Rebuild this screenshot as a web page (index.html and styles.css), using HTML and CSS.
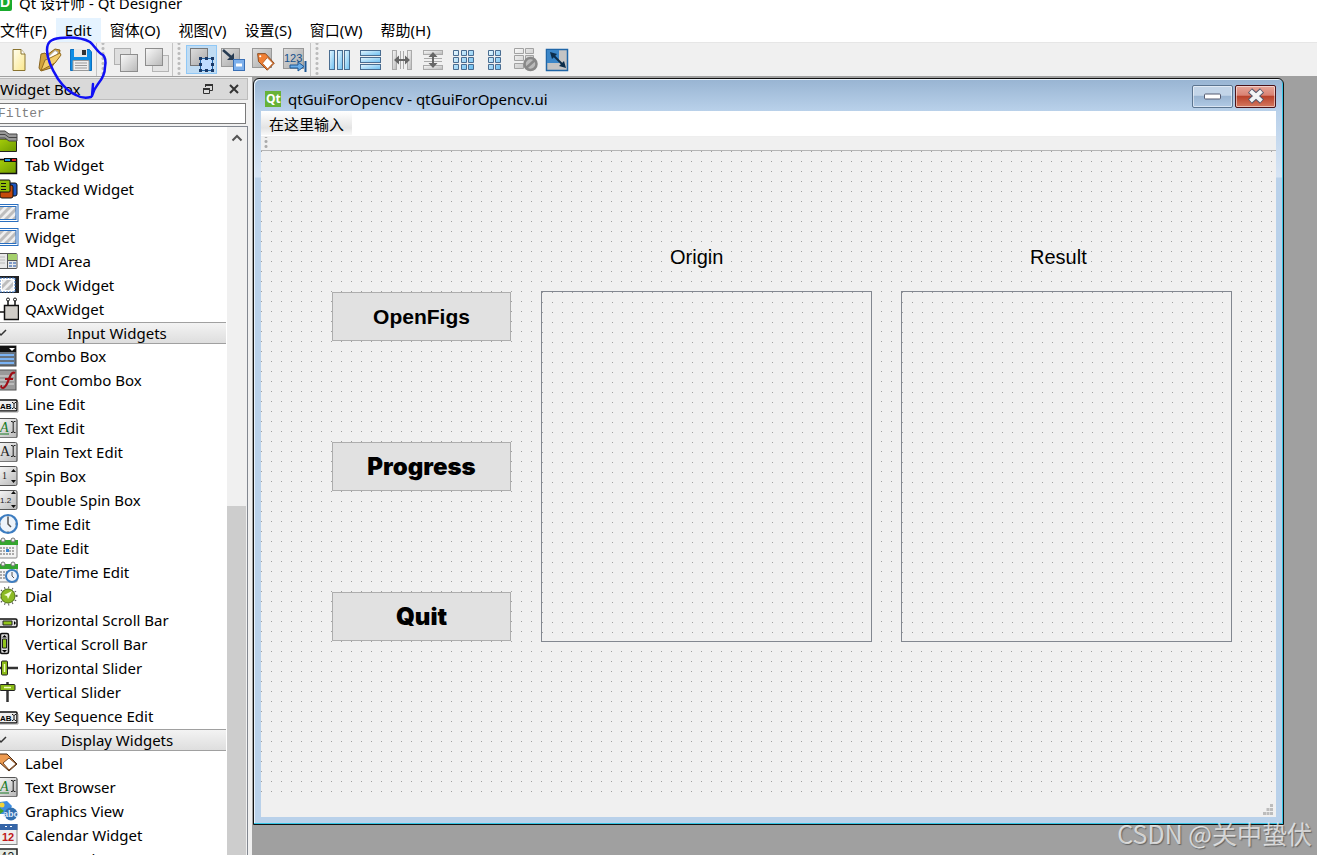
FILE: index.html
```
<!DOCTYPE html>
<html lang="zh-CN">
<head>
<meta charset="UTF-8">
<meta name="viewport" content="width=device-width, initial-scale=1.0">
<title>Qt 设计师 - Qt Designer</title>
<link rel="stylesheet" href="styles.css">
</head>
<body>
<!-- shared gradients and repeated icons -->
<svg class="defs" width="0" height="0">
    <defs>
        <linearGradient id="gray" x2="1" y2="1"><stop offset="0" stop-color="#fafafa"/><stop offset="1" stop-color="#b8b8b8"/></linearGradient>
        <linearGradient id="steel" x2="1" y2="1"><stop offset="0" stop-color="#dedede"/><stop offset="1" stop-color="#a8a8a8"/></linearGradient>
        <linearGradient id="blue" x2="1" y2="1"><stop offset="0" stop-color="#e8f8ff"/><stop offset="1" stop-color="#69bdf0"/></linearGradient>
        <linearGradient id="green" x2="1" y2="1"><stop offset="0" stop-color="#a8cf0a"/><stop offset="1" stop-color="#6d9a00"/></linearGradient>
        <linearGradient id="paper" x2="1" y2="1"><stop offset="0" stop-color="#fffef0"/><stop offset="1" stop-color="#fbe78c"/></linearGradient>
        <pattern id="hatch" width="8" height="8" patternUnits="userSpaceOnUse"><rect width="8" height="8" fill="#efefef"/><path d="M-2 10L10-2M-6 6L6-6M2 14L14 2" stroke="#bdbdbd" stroke-width="3"/></pattern>
        <symbol id="abi" viewBox="0 0 19 24"><rect x="-4" y="8" width="21" height="11" rx="1" fill="#eee" stroke="#111" stroke-width="1.5"/><path d="M-2 20H18V10" stroke="#999" fill="none"/><text x="0" y="17" font-size="8" font-weight="bold" font-family="Liberation Sans">AB</text><path d="M12 10.500h1l1 1 1-1h1M14 11v5M12 16.500h1l1-1 1 1h1" stroke="#111" fill="none"/></symbol>
        <symbol id="frame" viewBox="0 0 19 24"><rect x="-3" y="3.500" width="21" height="17" fill="#fff" stroke="#2a6fc0"/><rect x="-1" y="5.500" width="17" height="13" fill="url(#hatch)" stroke="#2a6fc0"/></symbol>
        <symbol id="ai" viewBox="0 0 19 24"><rect x="-4" y="2.500" width="21" height="19" rx="1.500" fill="url(#gray)" stroke="#555"/><path d="M-1 21.500H17V4" stroke="#777" fill="none"/><path d="M11 5.500h1.500l.7 1 .7-1H15.500M13.200 6v10M11 16.500h1.500l.7-1 .7 1H15.500" stroke="#222" fill="none"/></symbol>
        <symbol id="cal" viewBox="0 0 19 24"><rect x="-4" y="5" width="21" height="17" rx="1" fill="#f4f4f4" stroke="#888"/><path d="M-4 4H18V9H-4z" fill="#35a52f"/><path d="M0 12H15M0 15H15M0 18H15" stroke="#aaa" stroke-width="2" stroke-dasharray="2 1"/><circle cx="3" cy="4" r="2" fill="#eee" stroke="#777"/><circle cx="13" cy="4" r="2" fill="#eee" stroke="#777"/></symbol>
        <symbol id="tag" viewBox="0 0 24 24"><path d="M3 3L12 3 22 14 14 22 4 12z" fill="#f18035" stroke="#823f12"/><path d="M14 7.500L20.500 14 14.500 20.500 8.500 14z" fill="#fff" stroke="#b55a20"/><circle cx="6" cy="6" r="1.200" fill="#fff"/></symbol>
    </defs>
</svg>

<header class="titlebar">
    <svg width="14" height="18" viewBox="0 0 14 18"><rect x="-8" y="-2" width="20" height="19" rx="2" fill="#19ab2d"/><text x="0" y="13" font-size="14" font-weight="bold" fill="#fff" font-family="Liberation Sans">D</text></svg>
    <span>Qt 设计师 - Qt Designer</span>
</header>

<nav class="menubar">
    <button>文件(F)</button>
    <button class="active">Edit</button>
    <button>窗体(O)</button>
    <button>视图(V)</button>
    <button>设置(S)</button>
    <button>窗口(W)</button>
    <button>帮助(H)</button>
</nav>

<div class="toolbar">
    <button aria-label="New"><svg viewBox="0 0 24 24"><path d="M6 1.500H14L18 6V22.500H6z" fill="url(#paper)" stroke="#8a7430"/><path d="M14 1.500V6H18" fill="#fff" stroke="#8a7430"/></svg></button>
    <button aria-label="Open"><svg viewBox="0 0 24 24"><path d="M1 20L3 6 7 5 9 7 17 1 22 2 21 9 13 20 3 23z" fill="#d2a33b" stroke="#886420"/><path d="M6 13L17 2.500 20 4 19 9 8 15z" fill="#fff" stroke="#aaa"/><path d="M3 22.500L7 12 12 10 22 5 23 7 17 15z" fill="#f2cd6c" stroke="#946c20"/></svg></button>
    <button aria-label="Save"><svg viewBox="0 0 24 24"><path d="M1.500 1.500H20.500L22.500 4V22.500H1.500z" fill="#0f8de4" stroke="#0b70c0"/><path d="M5 1H18V9H5z" fill="#e8e8e8"/><path d="M13 2H17V7H13z" fill="#333"/><path d="M4 12.500H20V22.500H4z" fill="#eee" stroke="#999"/><path d="M6 15H18M6 17.500H18M6 20H18" stroke="#999"/></svg></button>
    <span class="handle"></span>
    <button aria-label="Send to back"><svg viewBox="0 0 24 24"><rect x=".5" y=".5" width="16" height="16" fill="#dedede" stroke="#b0b0b0"/><rect x="6.500" y="6.500" width="17" height="17" fill="url(#gray)" stroke="#8d8d8d"/></svg></button>
    <button aria-label="Bring to front"><svg viewBox="0 0 24 24"><rect x="7.500" y="7.500" width="16" height="16" fill="#e4e4e4" stroke="#b5b5b5"/><rect x=".5" y=".5" width="17" height="17" fill="url(#gray)" stroke="#8d8d8d"/></svg></button>
    <span class="handle"></span>
    <button class="active" aria-label="Edit widgets"><svg viewBox="0 0 24 24"><rect x=".5" y=".5" width="17" height="17" fill="url(#steel)" stroke="#777"/><rect x="10.500" y="10.500" width="12" height="12" fill="#bfdcff" stroke="#2266a8"/><path d="M9 9h3v3H9zM15 9h3v3h-3zM21 9h3v3h-3zM9 15h3v3H9zM21 15h3v3h-3zM9 21h3v3H9zM15 21h3v3h-3zM21 21h3v3h-3z" fill="#193866"/></svg></button>
    <button aria-label="Edit signals"><svg viewBox="0 0 24 24"><rect x=".5" y=".5" width="18" height="18" fill="url(#steel)" stroke="#999"/><path d="M2 2L10 9" stroke="#263b52" stroke-width="2.500"/><path d="M13 5V12H6z" fill="#263b52"/><rect x="12.500" y="11.500" width="11" height="11" fill="#7db0ec" stroke="#386eb4"/><path d="M15 15.500H21V18.500H15z" fill="#fff"/></svg></button>
    <button aria-label="Edit buddies"><svg viewBox="0 0 24 24"><rect x=".5" y=".5" width="19" height="19" fill="url(#steel)" stroke="#999"/><use href="#tag" x="3" y="3" width="21" height="21"/></svg></button>
    <button aria-label="Edit tab order"><svg viewBox="0 0 24 24"><rect x=".5" y=".5" width="20" height="20" fill="url(#steel)" stroke="#999"/><text x="1" y="14" font-size="11" fill="#15518c" font-family="Liberation Sans">123</text><path d="M7 17H15V14L21 18.500 15 23V20H7z" fill="#6caee8" stroke="#1d5795"/><path d="M22.500 13V24" stroke="#1d5795" stroke-width="2"/></svg></button>
    <span class="handle"></span>
    <button aria-label="Lay out horizontally"><svg viewBox="0 0 24 24"><g fill="url(#blue)" stroke="#4a6d91"><rect x="1.500" y="2.500" width="5" height="19"/><rect x="9.500" y="2.500" width="5" height="19"/><rect x="16.500" y="2.500" width="5" height="19"/></g></svg></button>
    <button aria-label="Lay out vertically"><svg viewBox="0 0 24 24"><g fill="url(#blue)" stroke="#4a6d91"><rect x="1.500" y="2.500" width="20" height="5"/><rect x="1.500" y="9.500" width="20" height="5"/><rect x="1.500" y="16.500" width="20" height="5"/></g></svg></button>
    <button aria-label="Horizontal splitter"><svg viewBox="0 0 24 24"><g fill="url(#gray)" stroke="#aaa"><rect x="2.500" y="2.500" width="4" height="19"/><rect x="17.500" y="2.500" width="4" height="19"/></g><path d="M10.500 3V21M13.500 3V21" stroke="#aaa"/><path d="M4 12L9 7.500V11H15V7.500L20 12 15 16.500V13H9V16.500z" fill="#666"/></svg></button>
    <button aria-label="Vertical splitter"><svg viewBox="0 0 24 24"><g fill="url(#gray)" stroke="#aaa"><rect x="2.500" y="2.500" width="19" height="4"/><rect x="2.500" y="17.500" width="19" height="4"/></g><path d="M3 10.500H21M3 13.500H21" stroke="#aaa"/><path d="M12 4L16.500 9H13V15H16.500L12 20 7.500 15H11V9H7.500z" fill="#666"/></svg></button>
    <button aria-label="Grid layout"><svg viewBox="0 0 24 24"><g fill="url(#blue)" stroke="#4a6d91"><path d="M1.500 2.500h5v5h-5zM9.500 2.500h5v5h-5zM16.500 2.500h5v5h-5zM1.500 9.500h5v5h-5zM9.500 9.500h5v5h-5zM16.500 9.500h5v5h-5zM1.500 16.500h5v5h-5zM9.500 16.500h5v5h-5zM16.500 16.500h5v5h-5z"/></g></svg></button>
    <button aria-label="Form layout"><svg viewBox="0 0 24 24"><g fill="url(#blue)" stroke="#4a6d91"><path d="M5.500 2.500h5v5h-5zM12.500 2.500h5v5h-5zM5.500 9.500h5v5h-5zM12.500 9.500h5v5h-5zM5.500 16.500h5v5h-5zM12.500 16.500h5v5h-5z"/></g></svg></button>
    <button aria-label="Break layout"><svg viewBox="0 0 24 24"><g fill="url(#gray)" stroke="#a2a2a2"><path d="M.5.500h9v5h-9zM11.500.5h8v5h-8zM.5 7.500h9v5h-9zM11.500 7.500h8v5h-8zM.5 15.500h9v5h-9z"/></g><circle cx="16.500" cy="16" r="6" fill="#bbb" stroke="#888" stroke-width="2.500"/><path d="M12 20L21 12" stroke="#888" stroke-width="2.500"/></svg></button>
    <button aria-label="Adjust size"><svg viewBox="0 0 24 24"><rect x="1.500" y="1.500" width="21" height="21" fill="#c4c4c4" stroke="#1f66a8" stroke-width="1.500"/><path d="M2 2H14V15H2z" fill="#3b86c8"/><path d="M7 6L19 18" stroke="#0c2d4a" stroke-width="2"/><path d="M5 4L12 6 7 11zM21 20L14 18 19 13z" fill="#0c2d4a"/></svg></button>
</div>

<main class="workspace">
    <aside class="dock">
        <div class="dock-title">
            <h2>Widget Box</h2>
            <button aria-label="Float"><svg width="12" height="12" viewBox="0 0 12 12"><path d="M3.500 4V1.500H10.500V7.500H8" fill="none" stroke="#333"/><path d="M3 2H11" stroke="#333" stroke-width="2"/><path d="M1.500 5.500H7.500V10.500H1.500z" fill="#ddd" stroke="#333"/><path d="M1 6H8" stroke="#333" stroke-width="2"/></svg></button>
            <button aria-label="Close"><svg width="12" height="12" viewBox="0 0 12 12"><path d="M2 2L10 10M10 2L2 10" stroke="#333" stroke-width="2"/></svg></button>
        </div>
        <input class="filter" type="text" placeholder="Filter" aria-label="Filter">
        <div class="box">
            <div class="list">
                <ul>
                    <li><svg viewBox="0 0 19 24"><path d="M-2 10H16.500V22.500H-2z" fill="url(#green)" stroke="#222"/><path d="M-2 2H5L9 5H17V12H9L5 9H-2z" fill="#999" stroke="#444"/><path d="M-2 5.500H5L9 8.500H17" stroke="#444" fill="none"/></svg>Tool Box</li>
                    <li><svg viewBox="0 0 19 24"><path d="M-2 6.500H16.500V20.500H-2z" fill="url(#green)" stroke="#111" stroke-width="1.500"/><path d="M4 5H17V9H4z" fill="#111"/><path d="M5 6H10V8H5z" fill="#299be3"/><path d="M12 6H16V8H12z" fill="#e02020"/></svg>Tab Widget</li>
                    <li><svg viewBox="0 0 19 24"><rect x="4" y="6" width="13" height="13" rx="2" fill="#1c55c0" stroke="#111"/><rect x="0" y="8" width="13" height="13" rx="2" fill="#c44a0c" stroke="#111"/><rect x="-4" y="3" width="14" height="12" rx="1" fill="#92be08" stroke="#111"/><path d="M1 6.500H6M1 9.500H6M1 12.500H6" stroke="#111"/></svg>Stacked Widget</li>
                    <li><svg><use href="#frame"/></svg>Frame</li>
                    <li><svg><use href="#frame"/></svg>Widget</li>
                    <li><svg viewBox="0 0 19 24"><rect x="-4" y="4.500" width="21" height="15" rx="1" fill="#e9e9e9" stroke="#555"/><path d="M8 5H17V11H8z" fill="#a5d06c"/><path d="M7.500 5V19M8 11.500H17" stroke="#555"/><path d="M0 8H5M0 11H5M0 14H5" stroke="#bbb"/><path d="M9 14H16M9 17H16" stroke="#7f9bc8" stroke-width="2" stroke-dasharray="3 1"/></svg>MDI Area</li>
                    <li><svg viewBox="0 0 19 24"><rect x="-4" y="3" width="23" height="17" fill="#222"/><rect x="0" y="5" width="15" height="14" fill="#fff" stroke="#326ebe" stroke-dasharray="2 1"/><rect x="2" y="7" width="11" height="10" fill="url(#hatch)"/></svg>Dock Widget</li>
                    <li><svg viewBox="0 0 19 24"><rect x="4.500" y="8.500" width="14" height="14" fill="#d0cdc8" stroke="#111" stroke-width="1.500"/><path d="M8 8V3M15 8V3M0 15H4" stroke="#111" stroke-width="1.500"/><circle cx="8" cy="2.500" r="1.500" fill="#fff" stroke="#111"/><circle cx="15" cy="2.500" r="1.500" fill="#fff" stroke="#111"/></svg>QAxWidget</li>
                </ul>
                <h3><svg width="8" height="8" viewBox="0 0 8 8"><path d="M-2 3L1 6 6 1" fill="none" stroke="#333" stroke-width="1.500"/></svg>Input Widgets</h3>
                <ul>
                    <li><svg viewBox="0 0 19 24"><rect x="-4" y="2" width="20" height="20" fill="#67727e" stroke="#444"/><path d="M-1 2H16V8H-1z" fill="#111"/><path d="M9 4H15L12 7z" fill="#fff"/><path d="M0 11H14M0 15H14M0 19H14" stroke="#7ab2f3" stroke-width="2"/></svg>Combo Box</li>
                    <li><svg viewBox="0 0 19 24"><rect x="-4" y="2" width="20" height="20" fill="#9a9a9a" stroke="#555"/><path d="M0 8H14M0 12H14M0 16H14" stroke="#bbb" stroke-width="2"/><path d="M15 5C9 2 9 19 3 20 1 20 1 18 2 18M5 11H13" fill="none" stroke="#a00d15" stroke-width="2.200"/></svg>Font Combo Box</li>
                    <li><svg><use href="#abi"/></svg>Line Edit</li>
                    <li><svg><use href="#ai"/><text x="0" y="16" font-size="14" font-style="italic" fill="#1a7a26" font-family="Liberation Serif">A</text><path d="M0 18H9" stroke="#1a7a26"/></svg>Text Edit</li>
                    <li><svg><use href="#ai"/><text x="0" y="16" font-size="14" fill="#222" font-family="Liberation Serif">A</text></svg>Plain Text Edit</li>
                    <li><svg viewBox="0 0 19 24"><rect x="-4" y="2.500" width="21" height="19" rx="1.500" fill="url(#gray)" stroke="#555"/><text x="2" y="15" font-size="10" fill="#222" font-family="Liberation Serif">1</text><path d="M11 8L13.500 5 16 8zM11 16L13.500 19 16 16z" fill="#111"/></svg>Spin Box</li>
                    <li><svg viewBox="0 0 19 24"><rect x="-4" y="2.500" width="21" height="19" rx="1.500" fill="url(#gray)" stroke="#555"/><text x="0" y="15" font-size="8" fill="#222" font-family="Liberation Sans">1.2</text><path d="M11 6L13.500 3 16 6zM11 17L13.500 20 16 17z" fill="#111"/></svg>Double Spin Box</li>
                    <li><svg viewBox="0 0 19 24"><circle cx="8" cy="12" r="9" fill="#edf3fa" stroke="#3c7cc0" stroke-width="2.200"/><path d="M8 5V12L11 15" fill="none" stroke="#555" stroke-width="1.500"/><path d="M8 4v1M8 19v1M15 12h1M0 12h1" stroke="#777"/></svg>Time Edit</li>
                    <li><svg viewBox="0 0 19 24"><use href="#cal"/><path d="M6 13H9V16H6z" fill="#3584d5"/></svg>Date Edit</li>
                    <li><svg viewBox="0 0 19 24"><use href="#cal"/><circle cx="12" cy="16" r="6" fill="#edf3fa" stroke="#3c7cc0" stroke-width="2"/><path d="M12 12V16L14 18" fill="none" stroke="#555"/></svg>Date/Time Edit</li>
                    <li><svg viewBox="0 0 19 24"><circle cx="8" cy="12" r="8.500" fill="none" stroke="#555" stroke-width="2" stroke-dasharray="1 3"/><circle cx="8" cy="12" r="7" fill="#8cba24" stroke="#4d7010"/><path d="M12 7L8 15 7 12 4 11z" fill="#f5ffd8"/></svg>Dial</li>
                    <li><svg viewBox="0 0 19 24"><rect x="-4" y="11" width="21" height="8" rx="1.500" fill="#ddd" stroke="#111" stroke-width="1.500"/><path d="M3 13H12V17H3z" fill="#91c51b" stroke="#222"/><path d="M14 13L16 15 14 17z"/></svg>Horizontal Scroll Bar</li>
                    <li><svg viewBox="0 0 19 24"><rect x=".5" y="1.500" width="8" height="20" rx="1.500" fill="#ddd" stroke="#111" stroke-width="1.500"/><path d="M2.500 7H6.500V16H2.500z" fill="#91c51b" stroke="#222"/><path d="M2 5.500L4.500 3 7 5.500zM2 18L4.500 20.500 7 18z"/></svg>Vertical Scroll Bar</li>
                    <li><svg viewBox="0 0 19 24"><path d="M0 12H18" stroke="#333" stroke-width="2.500"/><rect x="1.500" y="5" width="6" height="14" rx="1" fill="#8aba16" stroke="#222"/><path d="M4.500 8V16" stroke="#f2ffc0" stroke-width="1.500"/></svg>Horizontal Slider</li>
                    <li><svg viewBox="0 0 19 24"><path d="M7.500 2V22" stroke="#333" stroke-width="2.500"/><rect x="0" y="4.500" width="15" height="6" rx="1" fill="#8aba16" stroke="#222"/><path d="M4 7.500H11" stroke="#f2ffc0" stroke-width="1.500"/></svg>Vertical Slider</li>
                    <li><svg><use href="#abi"/></svg>Key Sequence Edit</li>
                </ul>
                <h3><svg width="8" height="8" viewBox="0 0 8 8"><path d="M-2 3L1 6 6 1" fill="none" stroke="#333" stroke-width="1.500"/></svg>Display Widgets</h3>
                <ul>
                    <li><svg viewBox="0 0 19 24"><path d="M-1 3L7 3 17 13 9 20 -1 11z" fill="#ed9a50" stroke="#4c2d16"/><path d="M9 7L16 13 9 19 3 12z" fill="#fff" stroke="#75431e"/></svg>Label</li>
                    <li><svg><use href="#ai"/><text x="0" y="16" font-size="14" font-style="italic" fill="#1a7a26" font-family="Liberation Serif">A</text><path d="M0 18H9" stroke="#1a7a26"/></svg>Text Browser</li>
                    <li><svg viewBox="0 0 19 24"><path d="M-1 3L7 2 12 7 8 15H-1z" fill="#3e8de0"/><circle cx="2" cy="6" r="2.500" fill="#f2d338"/><path d="M0 9L4 12 0 15z" fill="#43a32a"/><circle cx="11" cy="15" r="6.500" fill="#326fae"/><text x="3" y="18" font-size="9" font-weight="bold" fill="#dce9f8" font-family="Liberation Sans">abc</text></svg>Graphics View</li>
                    <li><svg viewBox="0 0 19 24"><rect x="-4" y="1.500" width="21" height="20" fill="#eee" stroke="#888"/><path d="M-4 1H17.500V7H-4z" fill="#3666a8"/><path d="M5 3.500H7M10 3.500H12" stroke="#fff"/><text x="2" y="18" font-size="11" font-weight="bold" fill="#c01818" font-family="Liberation Sans">12</text></svg>Calendar Widget</li>
                    <li><svg viewBox="0 0 19 24"><rect x="-4" y="2" width="21" height="19" fill="#e5eae2" stroke="#222" stroke-width="1.500"/><text x="0" y="14" font-size="12" fill="#111" font-family="Liberation Mono">42</text></svg>LCD Number</li>
                </ul>
            </div>
            <div class="scrollbar">
                <button aria-label="Scroll up"><svg width="12" height="8" viewBox="0 0 12 8"><path d="M1.500 6.500L6 2 10.500 6.500" fill="none" stroke="#555" stroke-width="2"/></svg></button>
                <div class="thumb"></div>
            </div>
        </div>
    </aside>

    <section class="mdi">
        <div class="window">
            <div class="window-title">
                <svg width="16" height="16" viewBox="0 0 16 16"><rect width="16" height="16" fill="#67b237"/><text x="1" y="12" font-size="12" font-weight="bold" fill="#fff" font-family="Open Sans">Qt</text></svg>
                <h1>qtGuiForOpencv - qtGuiForOpencv.ui</h1>
                <button class="minimize" aria-label="Minimize"><svg width="18" height="16" viewBox="0 0 18 16"><rect x=".5" y="6" width="16" height="5" rx="1" fill="#fff" stroke="#555b70"/></svg></button>
                <button class="close" aria-label="Close window"><svg width="18" height="16" viewBox="0 0 18 16"><path d="M3 2.500L15 13.500M15 2.500L3 13.500" stroke="#54566a" stroke-width="6"/><path d="M3.500 3L14.500 13M14.500 3L3.500 13" stroke="#f4f4f4" stroke-width="4"/></svg></button>
            </div>
            <div class="form">
                <div class="form-menu"><button>在这里输入</button></div>
                <div class="form-toolbar"></div>
                <div class="canvas">
                    <span class="label origin">Origin</span>
                    <span class="label result">Result</span>
                    <button class="push open">OpenFigs</button>
                    <button class="push progress">Progress</button>
                    <button class="push quit">Quit</button>
                    <div class="view view-origin"></div>
                    <div class="view view-result"></div>
                </div>
                <div class="statusbar"><svg width="10" height="11" viewBox="0 0 10 11"><path d="M7 0h3v3H7zM3.500 4h3v3h-3zM7 4h3v3H7zM0 8h3v3H0zM3.500 8h3v3h-3zM7 8h3v3H7z" fill="#bcbcbc"/></svg></div>
            </div>
        </div>
    </section>
</main>

<svg class="pen" width="120" height="110" viewBox="0 0 120 110"><path d="M93 84L92 96C93 92 94 89 98 84C103 78 105 73 105 67C106 62 106 58 103 55C97 52 95 46 90 42C83 38 71 37 60 38C51 39 47 42 47 50C47 60 53 71 58 79C63 86 69 92 76 95C81 98 87 98 91 97" fill="none" stroke="#1010f5" stroke-width="2.500" stroke-linecap="round" stroke-linejoin="round"/></svg>
<div class="watermark">CSDN @关中蛰伏</div>
</body>
</html>
```
FILE: styles.css
```
* {
    box-sizing: border-box;
}

body {
    margin: 0;
    height: 100vh;
    display: flex;
    flex-direction: column;
    overflow: hidden;
    position: relative;
    background-color: #fff;
    color: #000;
    font-family: "Noto Sans", "Noto Sans CJK SC", sans-serif;
    font-size: 15px;
}

button {
    margin: 0;
    padding: 0;
    border: none;
    background: none;
    color: inherit;
    font: inherit;
}

h1, h2, h3, ul {
    margin: 0;
    padding: 0;
    font-size: inherit;
    font-weight: normal;
    list-style: none;
}

svg {
    display: block;
    flex: none;
}

.defs {
    position: absolute;
}

.titlebar {
    display: flex;
    align-items: center;
    gap: 5px;
    height: 26px;
    margin-top: -8px;
    padding-bottom: 4px;
    flex: none;
    line-height: 20px;
}

/* menu */
.menubar {
    display: flex;
    flex: none;
    height: 24px;
    margin-left: -9px;
}

.menubar button {
    padding: 0 9px;
    line-height: 24px;
    white-space: nowrap;
}

.menubar .active {
    background-color: #e5f3ff;
}

/* toolbar */
.toolbar {
    display: flex;
    align-items: center;
    flex: none;
    height: 35px;
    padding: 0 3px;
    background-color: #f0f0f0;
    border-top: 1px solid #e6e6e6;
    border-bottom: 1px solid #a0a0a0;
}

.toolbar button {
    width: 31px;
    height: 29px;
    display: flex;
    align-items: center;
    justify-content: center;
}

.toolbar svg {
    width: 24px;
    height: 24px;
}

.toolbar .active {
    background-color: #c0dcf3;
    border: 1px solid #90c8f6;
}

.handle {
    width: 14px;
    height: 100%;
    background: radial-gradient(circle, #bbb 1px, transparent 2px) 4px 3px / 4px 5px repeat-y;
    border-left: 1px solid #c4c4c4;
}

.workspace {
    display: flex;
    flex: 1;
    min-height: 0;
    background-color: #f0f0f0;
}

/* widget box */
.dock {
    width: 248px;
    margin-right: 4px;
    flex: none;
    display: flex;
    flex-direction: column;
}

.dock-title {
    display: flex;
    align-items: center;
    gap: 14px;
    height: 22px;
    margin-top: 1px;
    padding-right: 7px;
    flex: none;
    background-color: #d9d9d9;
    border: 1px solid #bcbcbc;
    border-left: none;
}

.dock-title h2 {
    flex: 1;
}

.filter {
    height: 21px;
    margin: 3px 2px 2px -4px;
    padding: 0 1px;
    flex: none;
    background-color: #fff;
    border: 1px solid #7a7a7a;
    font-family: "Liberation Mono", monospace;
    font-size: 13px;
}

.filter::placeholder {
    color: #808080;
}

.box {
    display: flex;
    flex: 1;
    min-height: 0;
    background-color: #fff;
    border-top: 1px solid #828790;
    border-right: 1px solid #828790;
}

.list {
    flex: 1;
    overflow: hidden;
    padding-top: 2px;
}

.list li {
    display: flex;
    align-items: center;
    gap: 6px;
    height: 24px;
    white-space: nowrap;
}

.list li svg {
    width: 19px;
    height: 24px;
}

.list h3 {
    display: flex;
    align-items: center;
    height: 22px;
    margin: 1px 1px 0 0;
    background: linear-gradient(#f3f3f3, #dedede);
    border-top: 1px solid #a0a0a0;
    border-bottom: 1px solid #a0a0a0;
}

.list h3 svg {
    margin-right: auto;
}

.list h3::after {
    content: "";
    margin-right: auto;
}

.scrollbar {
    width: 20px;
    display: flex;
    flex-direction: column;
    background-color: #f0f0f0;
    padding-right: 1px;
}

.scrollbar button {
    height: 22px;
    margin-bottom: 357px;
    flex: none;
    display: flex;
    align-items: center;
    justify-content: center;
}

.thumb {
    flex: 1;
    background-color: #cdcdcd;
}

/* form window */
.mdi {
    flex: 1;
    min-width: 0;
    display: flex;
    padding: 1px 33px 30px 1px;
    background-color: #a0a0a0;
}

.window {
    flex: 1;
    min-width: 0;
    display: flex;
    flex-direction: column;
    padding: 0 7px 7px;
    background: linear-gradient(#98b4d2, #b9d1ea 32px, #d6e4f4 98px, #b9d1ea 99px);
    border: 1px solid #111;
    border-radius: 6px 6px 0 0;
    box-shadow: inset -1px -1px #35c5e5, inset 1px 1px #eaf3fc;
}

.window-title {
    display: flex;
    align-items: center;
    height: 32px;
    padding: 8px 0 0 4px;
    gap: 7px;
    flex: none;
}

.window-title h1 {
    flex: 1;
    white-space: nowrap;
}

.window-title button {
    width: 41px;
    height: 23px;
    margin-bottom: 6px;
    display: flex;
    align-items: center;
    justify-content: center;
    border: 1px solid #5c7590;
    border-radius: 2px;
    box-shadow: inset 0 0 0 1px rgba(255, 255, 255, 0.5);
}

.window-title .minimize {
    margin-right: -5px;
    background: linear-gradient(#c3d5e8 45%, #99b4d1 46%, #b1cae5);
}

.window-title .close {
    background: linear-gradient(#e6a598, #d98172 45%, #b83e27 46%, #d4785f);
    border-color: #4b1218;
}

.form {
    flex: 1;
    min-height: 0;
    display: flex;
    flex-direction: column;
    background-color: #f0f0f0;
}

.form-menu {
    height: 26px;
    flex: none;
    background-color: #fff;
    border-bottom: 1px solid #eee;
}

.form-menu button {
    height: 24px;
    padding: 0 8px;
    background: linear-gradient(#fff, #e4e4e4 70%, #f8f8f8);
}

.form-toolbar {
    height: 14px;
    flex: none;
    background: radial-gradient(circle, #aaa 1px, transparent 2px) 3px 2px / 4px 5px repeat-y;
    background-clip: content-box;
    padding-right: calc(100% - 8px);
    border-bottom: 1px solid #b4b4b4;
}

.canvas {
    position: relative;
    flex: 1;
    background: conic-gradient(from 270deg at 1px 1px, #a0a0a0 90deg, #f0f0f0 0) 0 0 / 10px 10px;
}

.label,
.push,
.view {
    position: absolute;
}

.label {
    top: 94px;
    font-family: "Liberation Sans", Arial, sans-serif;
    font-size: 20px;
    line-height: 24px;
}

.origin {
    left: 409px;
}

.result {
    left: 769px;
}

.push {
    left: 71px;
    width: 179px;
    height: 49px;
    background-color: #e1e1e1;
    border: 1px solid #adadad;
    font-family: Inter, sans-serif;
    font-weight: 900;
    font-size: 24px;
}

.open {
    top: 141px;
    font-family: "Liberation Sans", Arial, sans-serif;
    font-weight: bold;
    font-size: 21px;
}

.progress {
    top: 291px;
}

.quit {
    top: 441px;
}

.view {
    top: 140px;
    width: 331px;
    height: 351px;
    border: 1px solid #828790;
    background: conic-gradient(from 270deg at 1px 1px, #a0a0a0 90deg, #f0f0f0 0) 0 0 / 10px 10px;
}

.view-origin {
    left: 280px;
}

.view-result {
    left: 640px;
}

.statusbar {
    height: 24px;
    flex: none;
    display: flex;
    justify-content: flex-end;
    align-items: flex-end;
    padding: 2px 3px;
}

/* overlays */
.pen {
    position: absolute;
    left: 0;
    top: 0;
    pointer-events: none;
}

.watermark {
    position: absolute;
    right: 5px;
    bottom: 4px;
    color: rgba(255, 255, 255, 0.7);
    font-family: "Noto Sans CJK SC", sans-serif;
    font-size: 25px;
    line-height: 36px;
    text-shadow: 1px 1px 1px rgba(60, 60, 60, 0.6);
}
```
